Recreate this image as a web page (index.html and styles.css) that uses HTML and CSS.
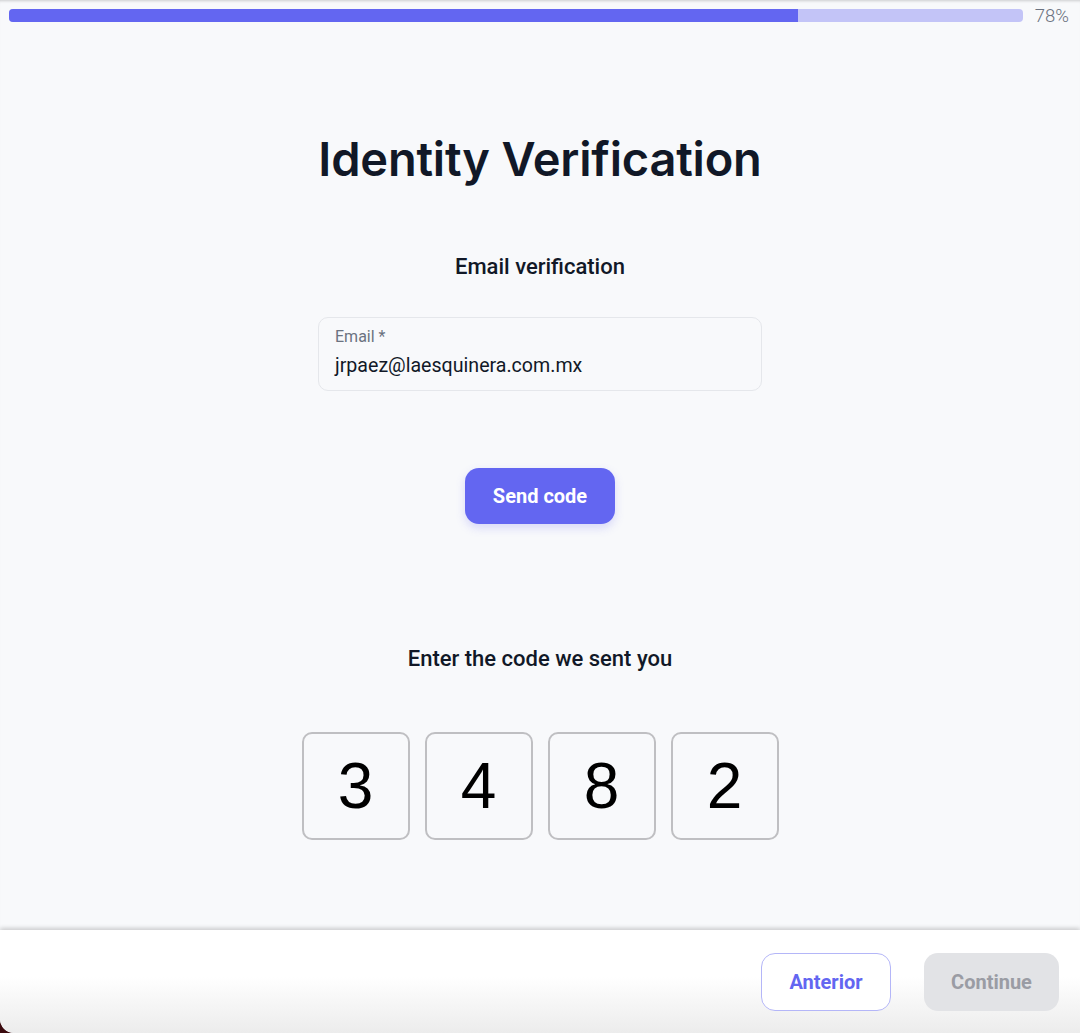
FILE: index.html
```html
<!DOCTYPE html>
<html lang="en">
<head>
<meta charset="utf-8">
<title>Identity Verification</title>
<link rel="stylesheet" href="styles.css">
</head>
<body>
<div class="page">
  <main class="main">
    <div class="progress-row">
      <div class="progress-track"><div class="progress-fill" style="width:77.8%"></div></div>
      <span class="progress-label">78%</span>
    </div>
    <h1 class="title">Identity Verification</h1>
    <h2 class="subtitle">Email verification</h2>
    <div class="field">
      <label class="field-label">Email *</label>
      <div class="field-value">jrpaez@laesquinera.com.mx</div>
    </div>
    <button class="btn-primary">Send code</button>
    <h2 class="subtitle code-title">Enter the code we sent you</h2>
    <div class="code-row">
      <div class="code-box">3</div>
      <div class="code-box">4</div>
      <div class="code-box">8</div>
      <div class="code-box">2</div>
    </div>
  </main>
  <footer class="footer">
    <button class="btn-outline">Anterior</button>
    <button class="btn-disabled">Continue</button>
  </footer>
</div>
</body>
</html>
```

FILE: styles.css
```css
* { box-sizing: border-box; }
html, body { margin: 0; padding: 0; }
body {
  background: #3a0a0e;
  font-family: Roboto, "Liberation Sans", sans-serif;
  width: 1080px;
  height: 1033px;
  overflow: hidden;
}
.page {
  height: 1033px;
  display: flex;
  flex-direction: column;
  background: #f8f9fb;
  border-bottom-left-radius: 14px;
  overflow: hidden;
}
.main {
  height: 930px;
  display: flex;
  flex-direction: column;
  align-items: center;
  box-shadow: inset 0 3px 3px -2px rgba(0,0,0,0.18);
}
.progress-row {
  align-self: stretch;
  display: flex;
  align-items: center;
  height: 27px;
  padding: 4px 11px 0 9px;
  gap: 12px;
}
.progress-track {
  flex: 1;
  height: 13px;
  background: #c3c4f7;
  border-radius: 4px;
  overflow: hidden;
}
.progress-fill {
  height: 100%;
  background: #6366f1;
}
.progress-label {
  font-family: Roboto, sans-serif;
  font-weight: 300;
  font-size: 18.5px;
  line-height: 22px;
  color: #6b7280;
}
.title {
  margin: 104px 0 0;
  font-family: Inter, sans-serif;
  font-weight: 600;
  font-size: 47px;
  line-height: 56px;
  color: #111827;
  letter-spacing: -0.2px;
}
.subtitle {
  margin: 66px 0 0;
  font-family: Roboto, sans-serif;
  font-weight: 500;
  font-size: 22px;
  line-height: 28px;
  color: #111827;
}
.field {
  margin-top: 36px;
  width: 444px;
  height: 74px;
  border: 1px solid #e5e7eb;
  border-radius: 10px;
  background: #f8f9fb;
  padding: 9px 16px 0;
}
.field-label {
  display: block;
  font-size: 16px;
  line-height: 20px;
  color: #6b7280;
}
.field-value {
  margin-top: 7px;
  font-size: 19.6px;
  line-height: 24px;
  color: #111827;
}
.btn-primary {
  margin-top: 77px;
  width: 150px;
  height: 56px;
  border: none;
  border-radius: 14px;
  background: #6366f1;
  color: #ffffff;
  font-family: Roboto, sans-serif;
  font-weight: 700;
  font-size: 20px;
  box-shadow: 0 4px 10px rgba(99,102,241,0.22);
}
.code-title {
  margin-top: 121px;
}
.code-row {
  margin-top: 59px;
  display: flex;
  gap: 15px;
}
.code-box {
  width: 108px;
  height: 108px;
  border: 2px solid #bfbfc2;
  border-radius: 10px;
  display: flex;
  align-items: center;
  justify-content: center;
  font-family: "Liberation Sans", Arial, sans-serif;
  font-size: 64px;
  color: #000;
}
.footer {
  height: 103px;
  display: flex;
  justify-content: flex-end;
  align-items: flex-start;
  gap: 33px;
  padding: 23px 21px 0 0;
  background: linear-gradient(to bottom, #ffffff 0%, #ffffff 45%, #ececec 100%);
  box-shadow: 0 -2px 4px rgba(0,0,0,0.18);
  border-bottom-left-radius: 14px;
}
.btn-outline, .btn-disabled {
  height: 58px;
  border-radius: 14px;
  font-family: Roboto, sans-serif;
  font-weight: 700;
  font-size: 20px;
}
.btn-outline {
  width: 130px;
  background: #ffffff;
  border: 1px solid #b4b6f8;
  color: #6366f1;
}
.btn-disabled {
  width: 135px;
  background: #e2e3e6;
  border: none;
  color: #9a9ca4;
}
```
